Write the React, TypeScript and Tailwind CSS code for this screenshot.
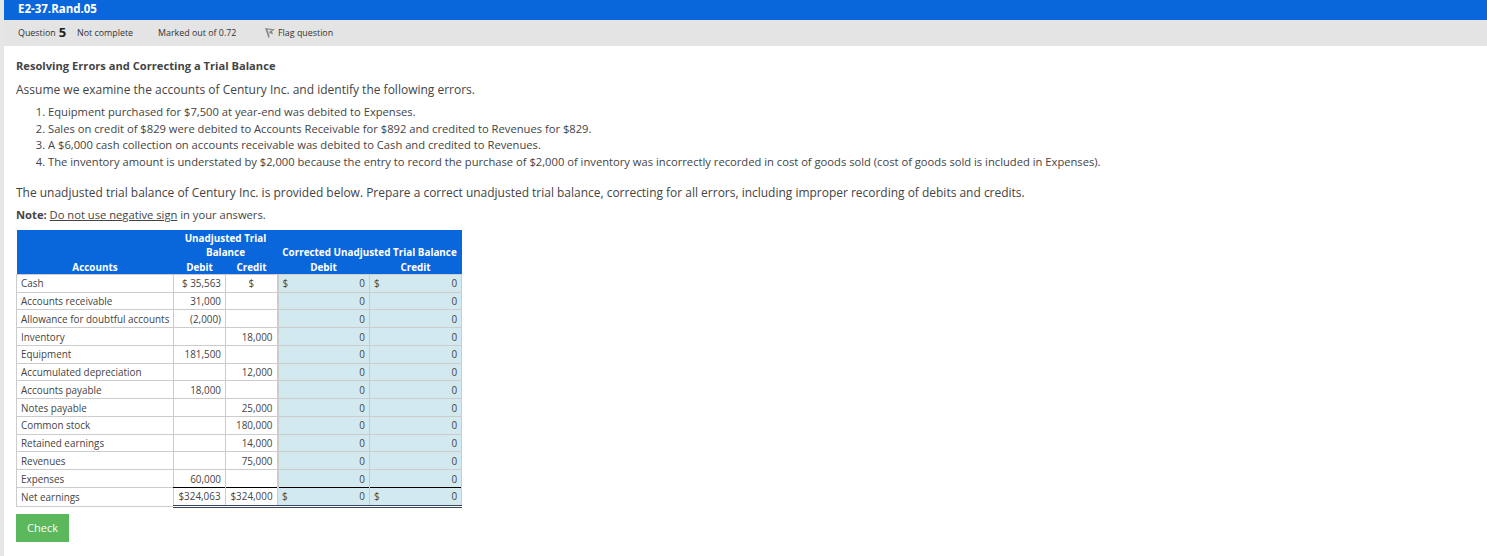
const rows: [string, string, string][] = [
  ["Cash", "$ 35,563", "$"],
  ["Accounts receivable", "31,000", ""],
  ["Allowance for doubtful accounts", "(2,000)", ""],
  ["Inventory", "", "18,000"],
  ["Equipment", "181,500", ""],
  ["Accumulated depreciation", "", "12,000"],
  ["Accounts payable", "18,000", ""],
  ["Notes payable", "", "25,000"],
  ["Common stock", "", "180,000"],
  ["Retained earnings", "", "14,000"],
  ["Revenues", "", "75,000"],
  ["Expenses", "60,000", ""],
];

const errors = [
  "Equipment purchased for $7,500 at year-end was debited to Expenses.",
  "Sales on credit of $829 were debited to Accounts Receivable for $892 and credited to Revenues for $829.",
  "A $6,000 cash collection on accounts receivable was debited to Cash and credited to Revenues.",
  "The inventory amount is understated by $2,000 because the entry to record the purchase of $2,000 of inventory was incorrectly recorded in cost of goods sold (cost of goods sold is included in Expenses).",
];

const cell = "border border-[#ccc] px-[4px] py-0 align-middle";
const total = "border-t-black border-b-[3px] border-b-[#34495e] border-double";

export default function App() {
  return (
    <div className="h-[556px] bg-[#e6e6e6] overflow-hidden font-['Open_Sans',sans-serif] text-[#444]">
      <div className="h-full ml-[4px] bg-white flex flex-col">
        <div className="h-[20px] bg-[#0a67db] pl-[14px] text-[11.5px] leading-[17px] font-bold text-white">
          E2-37.Rand.05
        </div>
        <div className="h-[26px] bg-[#e4e4e4] pl-[14px] flex items-center text-[8.9px] text-[#333]">
          <span className="w-[59px] flex items-center gap-[3px]">
            Question <span className="text-[13px] font-bold leading-none text-[#222]">5</span>
          </span>
          <span className="w-[81px]">Not complete</span>
          <span className="w-[106px]">Marked out of 0.72</span>
          <span className="flex items-center gap-[2px]">
            <svg width="12" height="12" viewBox="0 0 12 12">
              <path d="M1 1 L11.5 2.5 L8 4 L9 7.5 L5.5 6 L5.2 11 L4.4 11 Z M3.5 2.6 L5.2 8 L5.4 4.6 L8 3.2 Z" fill="#888" fillRule="evenodd" />
            </svg>
            Flag question
          </span>
        </div>
        <div className="pl-[12px] pt-[12px]">
          <p className="text-[11.15px] leading-[15px] font-bold">Resolving Errors and Correcting a Trial Balance</p>
          <p className="mt-[9px] text-[12px] leading-[15px]">Assume we examine the accounts of Century Inc. and identify the following errors.</p>
          <ol className="mt-[7px] ml-[32px] list-decimal text-[11.2px] leading-[16.6px]">
            {errors.map((e) => (
              <li key={e}>{e}</li>
            ))}
          </ol>
          <p className="mt-[15px] text-[11.97px] leading-[15px]">
            The unadjusted trial balance of Century Inc. is provided below. Prepare a correct unadjusted trial balance, correcting for all errors, including improper recording of debits and credits.
          </p>
          <p className="mt-[7px] text-[11.2px] leading-[15px]">
            <b>Note:</b> <span className="underline">Do not use negative sign</span> in your answers.
          </p>
          <table className="mt-[8px] w-[445px] table-fixed border-collapse text-[9.9px] leading-[12px]">
            <colgroup>
              <col className="w-[157px]" />
              <col className="w-[52px]" />
              <col className="w-[52px]" />
              <col className="w-[92px]" />
              <col className="w-[92px]" />
            </colgroup>
            <thead className="bg-[#0a67db] text-white text-center">
              <tr className="h-[29px]">
                <th />
                <th colSpan={2} className="leading-[14px] font-bold">Unadjusted Trial Balance</th>
                <th colSpan={2} className="align-bottom font-bold leading-[14px]">Corrected Unadjusted Trial Balance</th>
              </tr>
              <tr className="h-[15px]">
                <th className="font-bold">Accounts</th>
                <th className="font-bold">Debit</th>
                <th className="font-bold">Credit</th>
                <th className="font-bold">Debit</th>
                <th className="font-bold">Credit</th>
              </tr>
            </thead>
            <tbody>
              {rows.map(([name, debit, credit], i) => (
                <tr key={name} className="h-[17.75px]">
                  <td className={`${cell} whitespace-nowrap pr-0`}>{name}</td>
                  <td className={`${cell} text-right`}>{debit}</td>
                  <td className={`${cell} ${credit === "$" ? "text-center" : "text-right"}`}>{credit}</td>
                  <td className={`${cell} bg-[#d3e9f0] border-l-2`}>
                    <div className="flex justify-between">
                      <span>{i === 0 ? "$" : ""}</span>
                      <span>0</span>
                    </div>
                  </td>
                  <td className={`${cell} bg-[#d3e9f0]`}>
                    <div className="flex justify-between">
                      <span>{i === 0 ? "$" : ""}</span>
                      <span>0</span>
                    </div>
                  </td>
                </tr>
              ))}
              <tr className="h-[19px]">
                <td className={cell}>Net earnings</td>
                <td className={`${cell} text-center px-0 ${total}`}>$324,063</td>
                <td className={`${cell} text-center px-0 ${total}`}>$324,000</td>
                <td className={`${cell} bg-[#d3e9f0] ${total}`}>
                  <div className="flex justify-between"><span>$</span><span>0</span></div>
                </td>
                <td className={`${cell} bg-[#d3e9f0] ${total}`}>
                  <div className="flex justify-between"><span>$</span><span>0</span></div>
                </td>
              </tr>
            </tbody>
          </table>
          <button className="mt-[6px] block w-[53px] h-[28px] bg-[#5cb85c] text-[11px] text-white">Check</button>
        </div>
      </div>
    </div>
  );
}
